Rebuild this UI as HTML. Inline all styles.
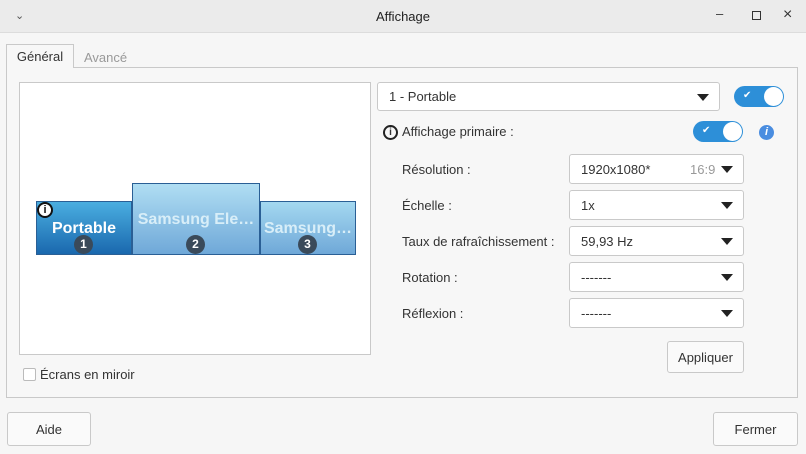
<!DOCTYPE html>
<html><head><style>
*{box-sizing:border-box;margin:0;padding:0}
body{width:806px;height:454px;background:#f6f6f6;font-family:"Liberation Sans","DejaVu Sans",sans-serif;font-size:13px;color:#333;position:relative;overflow:hidden}
.abs{position:absolute}
.title{left:0;top:0;width:806px;height:33px;background:#ebebeb;border-bottom:1px solid #dcdcdc}
.btn{background:#fafafa;border:1px solid #c9c9c9;border-radius:3px;text-align:center}
.dd{background:#fff;border:1px solid #c9c9c9;border-radius:3px;padding-left:11px;font-size:13px}
.arr{position:absolute;right:10px;top:11px;width:0;height:0;border-left:6px solid transparent;border-right:6px solid transparent;border-top:7px solid #222}
.tog{width:50px;height:21px;border-radius:11px;background:#2d8fd8}
.tog .k{position:absolute;right:1px;top:1px;width:19px;height:19px;border-radius:50%;background:#fff}
.tog .c{position:absolute;left:9px;top:4px;color:#fff;font-size:10px}
.lbl{font-size:13px;color:#333}
.mon{border:1px solid #2a5f95;color:#fff;font-weight:bold;text-align:center}
.num{position:absolute;width:19px;height:19px;border-radius:50%;background:#3a4a5a;color:#fff;font-size:12px;font-weight:bold;line-height:19px;text-align:center;left:50%;margin-left:-10px;bottom:0}
</style></head><body>
<div class="abs title"></div>
<div class="abs" style="left:15px;top:9px;font-size:11px;color:#555">&#8964;</div>
<div class="abs" style="left:0;width:806px;top:9px;text-align:center;font-size:13px;color:#222">Affichage</div>
<div class="abs" style="left:716px;top:6px;font-size:13px">&#8211;</div>
<div class="abs" style="left:752px;top:11px;width:9px;height:9px;border:1px solid #333"></div>
<div class="abs" style="left:783px;top:6px;font-size:16px">&#215;</div>

<div class="abs" style="left:6px;top:67px;width:792px;height:331px;border:1px solid #c9c9c9;background:#f7f7f7"></div>
<div class="abs" style="left:6px;top:44px;width:68px;height:24px;border:1px solid #c9c9c9;border-bottom:none;background:#f7f7f7;text-align:center;line-height:24px">Général</div>
<div class="abs" style="left:84px;top:50px;color:#999">Avancé</div>

<div class="abs" style="left:19px;top:82px;width:352px;height:273px;background:#fff;border:1px solid #c9c9c9"></div>
<div class="abs mon" style="left:36px;top:201px;width:96px;height:54px;background:linear-gradient(#4aaee0,#1a68ae);font-size:16px;padding-top:18px">Portable<div class="num">1</div></div>
<div class="abs" style="left:37px;top:202px;width:16px;height:16px;border:2px solid #111;border-radius:50%;background:#fff;font-size:11px;font-weight:bold;text-align:center;line-height:12px;color:#111">i</div>
<div class="abs mon" style="left:132px;top:183px;width:128px;height:72px;background:linear-gradient(#b0def3,#6fa8d8);color:#d8eef8;font-size:16px;padding-top:27px">Samsung Ele…<div class="num">2</div></div>
<div class="abs mon" style="left:260px;top:201px;width:96px;height:54px;background:linear-gradient(#a4d8f0,#6fa8d8);color:#d8eef8;font-size:16px;padding-top:18px">Samsung…<div class="num">3</div></div>

<div class="abs" style="left:23px;top:368px;width:13px;height:13px;border:1px solid #bbb;background:#fff;border-radius:2px"></div>
<div class="abs lbl" style="left:40px;top:367px">Écrans en miroir</div>

<div class="abs dd" style="left:377px;top:82px;width:343px;height:29px;line-height:27px">1 - Portable<div class="arr"></div></div>
<div class="abs tog" style="left:734px;top:86px"><span class="c">✔</span><div class="k"></div></div>

<div class="abs" style="left:383px;top:125px;width:15px;height:15px;border:2px solid #222;border-radius:50%;font-size:10px;font-weight:bold;text-align:center;line-height:11px">i</div>
<div class="abs lbl" style="left:402px;top:124px">Affichage primaire :</div>
<div class="abs tog" style="left:693px;top:121px"><span class="c">✔</span><div class="k"></div></div>
<div class="abs" style="left:759px;top:125px;width:15px;height:15px;border-radius:50%;background:#4a8de0;color:#fff;font-size:11px;font-weight:bold;font-style:italic;text-align:center;line-height:15px">i</div>

<div class="abs lbl" style="left:402px;top:162px">Résolution :</div>
<div class="abs dd" style="left:569px;top:154px;width:175px;height:30px;line-height:29px">1920x1080*<span style="position:absolute;left:120px;color:#999">16:9</span><div class="arr"></div></div>
<div class="abs lbl" style="left:402px;top:198px">Échelle :</div>
<div class="abs dd" style="left:569px;top:190px;width:175px;height:30px;line-height:29px">1x<div class="arr"></div></div>
<div class="abs lbl" style="left:402px;top:234px">Taux de rafraîchissement :</div>
<div class="abs dd" style="left:569px;top:226px;width:175px;height:30px;line-height:29px">59,93 Hz<div class="arr"></div></div>
<div class="abs lbl" style="left:402px;top:270px">Rotation :</div>
<div class="abs dd" style="left:569px;top:262px;width:175px;height:30px;line-height:29px">-------<div class="arr"></div></div>
<div class="abs lbl" style="left:402px;top:306px">Réflexion :</div>
<div class="abs dd" style="left:569px;top:298px;width:175px;height:30px;line-height:29px">-------<div class="arr"></div></div>

<div class="abs btn" style="left:667px;top:341px;width:77px;height:32px;line-height:31px">Appliquer</div>
<div class="abs btn" style="left:7px;top:412px;width:84px;height:34px;line-height:34px">Aide</div>
<div class="abs btn" style="left:713px;top:412px;width:85px;height:34px;line-height:34px">Fermer</div>
</body></html>
